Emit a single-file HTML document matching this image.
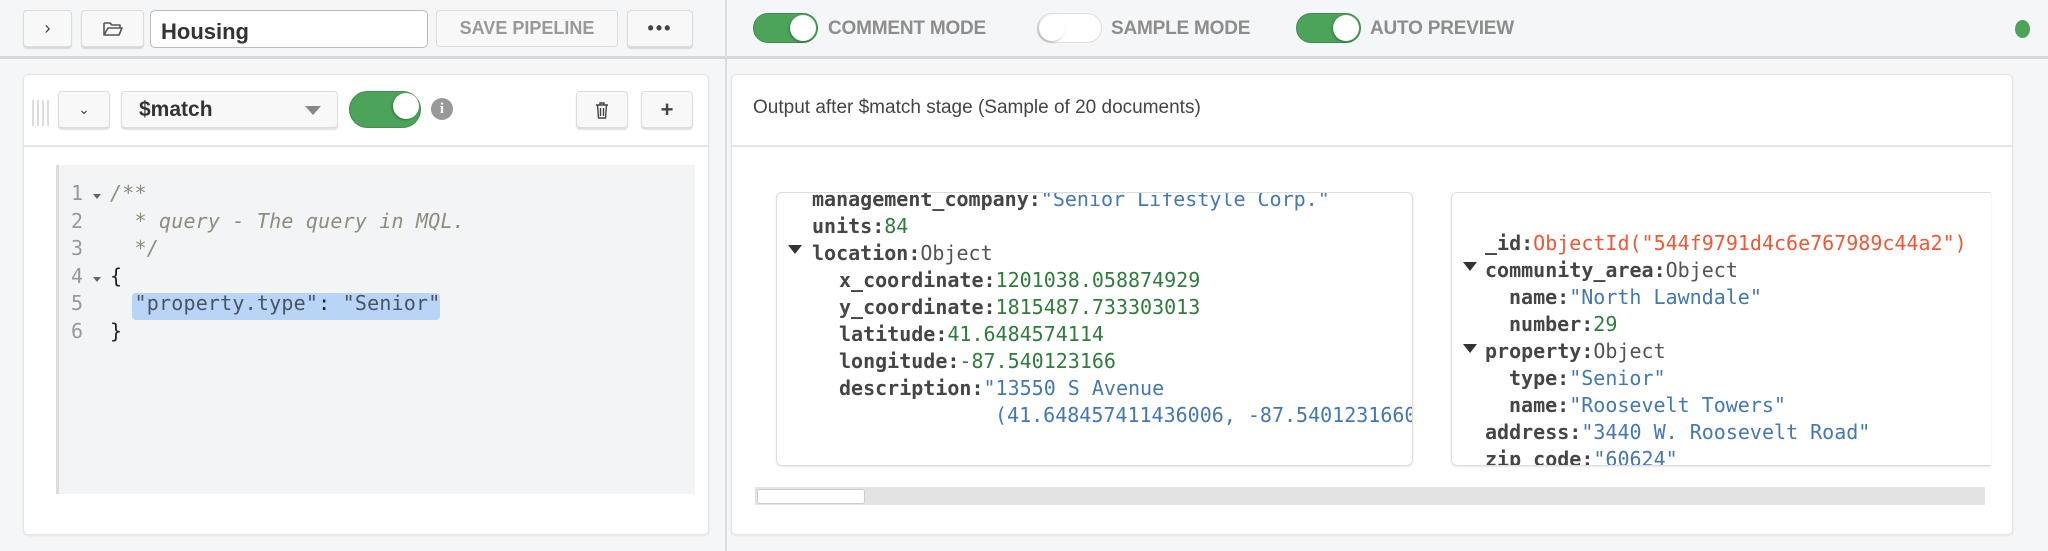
<!DOCTYPE html>
<html><head><meta charset="utf-8"><style>
*{box-sizing:border-box;margin:0;padding:0}
body{width:2048px;height:551px;background:#f5f6f7;position:relative;overflow:hidden;font-family:"Liberation Sans",sans-serif;color:#494747}
.abs{position:absolute}
.btn{position:absolute;background:#f8f8f8;border:1px solid #ddd;border-radius:4px;box-shadow:0 2px 1px rgba(0,0,0,.12);display:flex;align-items:center;justify-content:center;color:#444}
.tg{position:absolute;width:65px;height:30px;border-radius:15px;background:#4ca35a;border:1px solid #3f8e4b}
.tg::after{content:"";position:absolute;right:1px;top:1px;width:26px;height:26px;border-radius:50%;background:#fff;box-shadow:-1px 1px 2px rgba(0,0,0,.3)}
.tg.off{background:#fff;border-color:#ddd}
.tg.off::after{left:1px;right:auto}
.lbl{position:absolute;font-size:19px;font-weight:bold;color:#8d8d8d;top:18px;letter-spacing:-.2px}
.card{position:absolute;background:#fff;border:1px solid #e4e4e4;border-radius:5px;box-shadow:0 1px 2px rgba(0,0,0,.08)}
.mono{font-family:"DejaVu Sans Mono","Liberation Mono",monospace}
.ln{position:absolute;white-space:pre;font-size:20px;line-height:27px}
.k{font-weight:bold;color:#454545}
.s{color:#4478b2}.n{color:#2f7c3c}.o{color:#545454}.id{color:#ef5736}
.tri{position:absolute;width:0;height:0;border-left:7px solid transparent;border-right:7px solid transparent;border-top:9px solid #333}
.doc{position:absolute;background:#fff;border:1px solid #ddd;border-radius:6px;overflow:hidden;box-shadow:0 1px 2px rgba(0,0,0,.1)}
</style></head><body>
<!-- top bar -->
<div class="abs" style="left:0;top:56px;width:2048px;height:3px;background:#d8d8d8"></div>
<div class="abs" style="left:725px;top:0;width:2px;height:551px;background:#dcdcdc"></div>
<div class="btn" style="left:23px;top:10px;width:49px;height:37px;font-size:18px">›</div>
<div class="btn" style="left:81px;top:10px;width:63px;height:37px">
<svg width="22" height="18" viewBox="0 0 22 18"><path d="M2 3h6l2 2h8v3M2 3v12h15l3-7H6L2 15" fill="none" stroke="#555" stroke-width="1.6" stroke-linejoin="round"/></svg></div>
<div class="abs" style="left:150px;top:10px;width:278px;height:38px;background:#fff;border:1px solid #bbb;border-radius:5px;font-size:22px;font-weight:bold;color:#333;padding:8px 10px">Housing</div>
<div class="btn" style="left:436px;top:10px;width:182px;height:37px;font-size:18px;font-weight:bold;color:#999;box-shadow:none">SAVE PIPELINE</div>
<div class="btn" style="left:627px;top:10px;width:66px;height:37px;font-size:18px;font-weight:bold;letter-spacing:2px">•••</div>

<div class="tg" style="left:753px;top:13px"></div><div class="lbl" style="left:828px">COMMENT MODE</div>
<div class="tg off" style="left:1037px;top:13px"></div><div class="lbl" style="left:1111px">SAMPLE MODE</div>
<div class="tg" style="left:1296px;top:13px"></div><div class="lbl" style="left:1370px">AUTO PREVIEW</div>
<div class="abs" style="left:2015px;top:20px;width:15px;height:18px;border-radius:50%;background:#4ca35a"></div>

<!-- left card -->
<div class="card" style="left:23px;top:74px;width:686px;height:461px"></div>
<div class="abs" style="left:24px;top:145px;width:684px;height:2px;background:#e6e6e6"></div>
<div class="abs" style="left:32px;top:100px;width:18px;height:26px;background:repeating-linear-gradient(90deg,#ddd 0 2px,transparent 2px 5px)"></div>
<div class="btn" style="left:58px;top:91px;width:52px;height:37px;font-size:14px">⌄</div>
<div class="btn" style="left:121px;top:91px;width:217px;height:37px;justify-content:flex-start;padding-left:17px;font-size:21px;font-weight:bold;color:#333">$match
<div class="abs" style="right:16px;top:14px;border-left:8px solid transparent;border-right:8px solid transparent;border-top:9px solid #888"></div></div>
<div class="tg" style="left:349px;top:91px;width:72px;height:37px;border-radius:19px"></div>
<div class="abs" style="left:431px;top:98px;width:22px;height:22px;border-radius:50%;background:#999;color:#fff;font:bold 15px 'Liberation Serif',serif;text-align:center;line-height:22px">i</div>
<div class="btn" style="left:576px;top:91px;width:52px;height:37px">
<svg width="14" height="18" viewBox="0 0 14 18"><path d="M1 4h12M5 4V2h4v2M2.5 4l1 13h7l1-13M5.5 7v8M8.5 7v8" fill="none" stroke="#444" stroke-width="1.4"/></svg></div>
<div class="btn" style="left:641px;top:91px;width:52px;height:37px;font-size:22px;font-weight:bold">+</div>

<div class="abs" style="left:56px;top:165px;width:639px;height:329px;background:#f3f4f5;border-left:3px solid #ddd"></div>
<div class="mono" style="position:absolute;left:71px;top:180px;font-size:20px;line-height:27.5px;color:#999;white-space:pre">1
2
3
4
5
6</div>
<div class="tri" style="left:93px;top:194px;border-width:5px 4px 0;border-top-color:#666"></div>
<div class="tri" style="left:93px;top:277px;border-width:5px 4px 0;border-top-color:#666"></div>
<div class="abs" style="left:132px;top:293px;width:308px;height:27px;background:#b8d5f8;border-radius:4px"></div>
<div class="mono" style="position:absolute;left:110px;top:180px;font-size:20px;line-height:27.5px;white-space:pre;color:#222;letter-spacing:.2px"><span style="color:#8c8d7f;font-style:italic">/**
  * query - The query in MQL.
  */</span>
{
  <span style="color:#4a5460">"property.type"</span>: <span style="color:#4a5460">"Senior"</span>
}</div>

<!-- right card -->
<div class="card" style="left:731px;top:74px;width:1282px;height:461px"></div>
<div class="abs" style="left:731px;top:145px;width:1282px;height:2px;background:#e6e6e6"></div>
<div class="abs" style="left:753px;top:97px;font-size:19px;color:#444">Output after $match stage (Sample of 20 documents)</div>

<div class="doc mono" style="left:776px;top:192px;width:637px;height:274px">
<div class="ln" style="left:35px;top:-7px"><span class="k">management_company:</span><span class="s">"Senior Lifestyle Corp."</span></div>
<div class="ln" style="left:35px;top:20px"><span class="k">units:</span><span class="n">84</span></div>
<div class="tri" style="left:11px;top:52px"></div>
<div class="ln" style="left:35px;top:47px"><span class="k">location:</span><span class="o">Object</span></div>
<div class="ln" style="left:62px;top:74px"><span class="k">x_coordinate:</span><span class="n">1201038.058874929</span></div>
<div class="ln" style="left:62px;top:101px"><span class="k">y_coordinate:</span><span class="n">1815487.733303013</span></div>
<div class="ln" style="left:62px;top:128px"><span class="k">latitude:</span><span class="n">41.6484574114</span></div>
<div class="ln" style="left:62px;top:155px"><span class="k">longitude:</span><span class="n">-87.540123166</span></div>
<div class="ln" style="left:62px;top:182px"><span class="k">description:</span><span class="s">"13550 S Avenue</span></div>
<div class="ln" style="left:218px;top:209px"><span class="s">(41.648457411436006, -87.5401231660</span></div>
</div>

<div class="doc mono" style="left:1451px;top:192px;width:540px;height:274px;border-right:none;border-radius:6px 0 0 6px">
<div class="ln" style="left:33px;top:37px"><span class="k">_id:</span><span class="id">ObjectId("544f9791d4c6e767989c44a2")</span></div>
<div class="tri" style="left:11px;top:69px"></div>
<div class="ln" style="left:33px;top:64px"><span class="k">community_area:</span><span class="o">Object</span></div>
<div class="ln" style="left:57px;top:91px"><span class="k">name:</span><span class="s">"North Lawndale"</span></div>
<div class="ln" style="left:57px;top:118px"><span class="k">number:</span><span class="n">29</span></div>
<div class="tri" style="left:11px;top:151px"></div>
<div class="ln" style="left:33px;top:145px"><span class="k">property:</span><span class="o">Object</span></div>
<div class="ln" style="left:57px;top:172px"><span class="k">type:</span><span class="s">"Senior"</span></div>
<div class="ln" style="left:57px;top:199px"><span class="k">name:</span><span class="s">"Roosevelt Towers"</span></div>
<div class="ln" style="left:33px;top:226px"><span class="k">address:</span><span class="s">"3440 W. Roosevelt Road"</span></div>
<div class="ln" style="left:33px;top:253px"><span class="k">zip_code:</span><span class="s">"60624"</span></div>
</div>

<div class="abs" style="left:755px;top:487px;width:1230px;height:18px;background:#e3e3e3"></div>
<div class="abs" style="left:757px;top:489px;width:108px;height:15px;background:#fff;border:1px solid #ccc;border-radius:3px"></div>
</body></html>
